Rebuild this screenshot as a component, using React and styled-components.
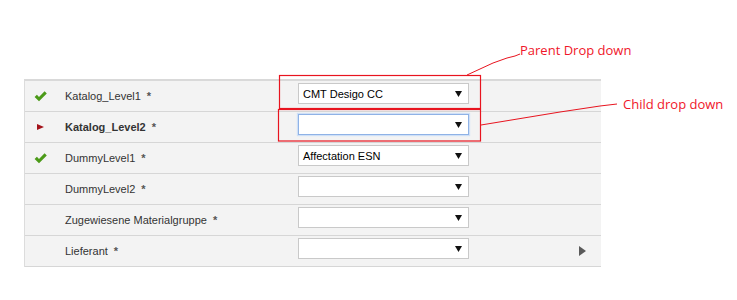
import React from 'react';
import styled, { createGlobalStyle } from 'styled-components';

const GlobalStyle = createGlobalStyle`
    body {
        margin: 0;
        background: #ffffff;
        font-family: 'Liberation Sans', Arial, sans-serif;
    }
`;

const Page = styled.div`
    position: relative;
    width: 737px;
    height: 300px;
    padding: 79px 0 0 24px;
    box-sizing: border-box;
`;

const Panel = styled.div`
    width: 577px;
    background: #f3f3f3;
    border-top: 2px solid #d9d9d9;
    border-left: 1px solid #dcdcdc;
    box-sizing: border-box;
`;

const Row = styled.div`
    display: grid;
    grid-template-columns: 40px 233px 171px 1fr;
    align-items: center;
    height: 31px;
    border-bottom: 1px solid #d6d6d6;
    box-sizing: border-box;
`;

const IconCell = styled.div`
    display: flex;
    align-items: center;
    padding-left: ${({ pad }) => pad}px;
`;

const Label = styled.div`
    font-size: 11px;
    color: #333333;
    font-weight: ${({ active }) => (active ? 'bold' : 'normal')};
    white-space: nowrap;
`;

const Star = styled.span`
    margin-left: 6px;
    color: #555555;
    font-size: 11px;
    font-weight: bold;
`;

const Select = styled.div`
    display: flex;
    align-items: center;
    justify-content: space-between;
    height: 21px;
    margin-bottom: 5px;
    padding: 0 6px 0 4px;
    background: #ffffff;
    border: 1px solid ${({ focused }) => (focused ? '#8fb2e6' : '#c9c9c9')};
    box-shadow: ${({ focused }) => (focused ? '0 0 1px 1px #cfe0f7' : 'none')};
    box-sizing: border-box;
    font-size: 11px;
    color: #000000;
`;

const Tail = styled.div`
    display: flex;
    justify-content: flex-end;
    padding-right: 15px;
`;

const Overlay = styled.svg`
    position: absolute;
    left: 0;
    top: 0;
    pointer-events: none;
`;

const Note = styled.div`
    position: absolute;
    left: ${({ x }) => x}px;
    top: ${({ y }) => y}px;
    font-family: 'Open Sans', sans-serif;
    font-size: 13px;
    color: #f0162a;
    white-space: nowrap;
`;

const Check = () => (
    <svg width="13" height="11" viewBox="0 0 13 11">
        <path d="M0.6 6 L2.9 3.8 L5 5.9 L10.6 0.3 L12.8 2.5 L5 10.3 Z" fill="#4b9a18" />
    </svg>
);

const Pointer = () => (
    <svg width="7" height="6" viewBox="0 0 7 6">
        <polygon points="0,0 7,3 0,6" fill="#a3121a" />
    </svg>
);

const Caret = () => (
    <svg width="7" height="6" viewBox="0 0 7 6">
        <polygon points="0,0 7,0 3.5,6" fill="#111111" />
    </svg>
);

const Play = () => (
    <svg width="7" height="10" viewBox="0 0 7 10">
        <polygon points="0,0 7,5 0,10" fill="#5a5a5a" />
    </svg>
);

const rows = [
    { label: 'Katalog_Level1', value: 'CMT Desigo CC', icon: 'check' },
    { label: 'Katalog_Level2', value: '', icon: 'pointer', active: true, focused: true },
    { label: 'DummyLevel1', value: 'Affectation ESN', icon: 'check' },
    { label: 'DummyLevel2', value: '' },
    { label: 'Zugewiesene Materialgruppe', value: '' },
    { label: 'Lieferant', value: '', play: true },
];

const App = () => (
    <>
        <GlobalStyle />
        <Page>
            <Panel>
                {rows.map((r, i) => (
                    <Row key={i}>
                        <IconCell pad={r.icon === 'pointer' ? 12 : 9}>
                            {r.icon === 'check' && <Check />}
                            {r.icon === 'pointer' && <Pointer />}
                        </IconCell>
                        <Label active={r.active}>
                            {r.label}
                            <Star>*</Star>
                        </Label>
                        <Select focused={r.focused}>
                            <span>{r.value}</span>
                            <Caret />
                        </Select>
                        <Tail>{r.play && <Play />}</Tail>
                    </Row>
                ))}
            </Panel>

            <Overlay width="737" height="300">
                <rect x="279.5" y="75.5" width="201" height="33" fill="none" stroke="#e8141f" strokeWidth="1.2" />
                <rect x="278.5" y="109.5" width="202" height="31.5" fill="none" stroke="#e8141f" strokeWidth="1.2" />
                <polyline points="467,75 493,63 507,58 515,56 520,54" fill="none" stroke="#e8141f" strokeWidth="1" />
                <polyline points="481,125 560,112 600,106 617,104" fill="none" stroke="#e8141f" strokeWidth="1" />
            </Overlay>
            <Note x={520} y={41}>Parent Drop down</Note>
            <Note x={623} y={95}>Child drop down</Note>
        </Page>
    </>
);

export default App;
